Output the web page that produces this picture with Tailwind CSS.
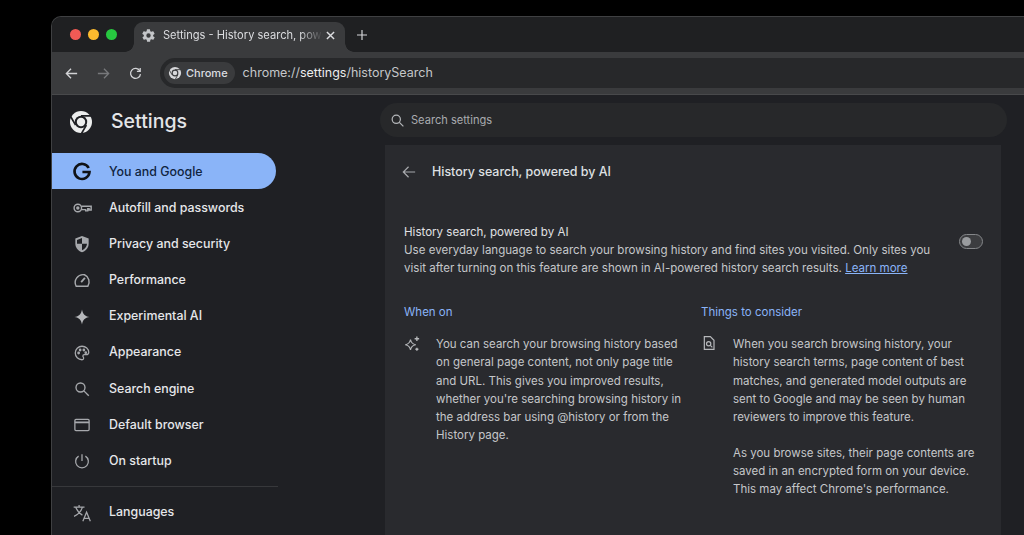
<!DOCTYPE html>
<html lang="en">
<head>
    <meta charset="UTF-8">
    <title>Settings - History search, powered by AI</title>
    <script src="https://cdn.jsdelivr.net/npm/@tailwindcss/browser@4"></script>
</head>
<body class="bg-black w-[1024px] h-[535px] overflow-hidden font-['Inter','Liberation_Sans',sans-serif]">
    <div class="ml-[51px] mt-[16px] w-[973px] h-[519px] rounded-tl-[10px] overflow-hidden border-l border-t border-[#3f4042] flex flex-col bg-[#1f2024]">

        <!-- tab strip -->
        <div class="h-[35px] shrink-0 bg-[#1f2022] flex items-end">
            <div class="flex items-center gap-[7px] pl-[18px] w-[82px] h-[35px] pb-[1px]">
                <span class="w-[11px] h-[11px] rounded-full bg-[#f25a55]"></span>
                <span class="w-[11px] h-[11px] rounded-full bg-[#fdbb2e]"></span>
                <span class="w-[11px] h-[11px] rounded-full bg-[#27c840]"></span>
            </div>
            <div class="relative w-[211px] h-[30px] bg-[#3a3b3d] rounded-t-[9px] flex items-center pl-[7px] pr-[10px] pb-[4px] text-[#dcdde0] text-[11.1px]">
                <span class="absolute -left-[9px] bottom-0 w-[9px] h-[9px] bg-[radial-gradient(circle_at_0_0,transparent_8.5px,#3a3b3d_9px)]"></span>
                <span class="absolute -right-[9px] bottom-0 w-[9px] h-[9px] bg-[radial-gradient(circle_at_100%_0,transparent_8.5px,#3a3b3d_9px)]"></span>
                <svg class="w-[15px] h-[15px] shrink-0" viewBox="0 0 24 24" fill="#c4c6c9"><path d="M19.4 13a7.6 7.6 0 0 0 0-2l2.1-1.6a.5.5 0 0 0 .1-.6l-2-3.5a.5.5 0 0 0-.6-.2l-2.5 1a7.4 7.4 0 0 0-1.7-1l-.4-2.6a.5.5 0 0 0-.5-.5h-4a.5.5 0 0 0-.5.4l-.4 2.7a7.4 7.4 0 0 0-1.7 1l-2.5-1a.5.5 0 0 0-.6.2l-2 3.5a.5.5 0 0 0 .1.6L4.6 11a7.6 7.6 0 0 0 0 2l-2.1 1.6a.5.5 0 0 0-.1.6l2 3.5c.1.2.4.3.6.2l2.5-1c.5.4 1.1.7 1.7 1l.4 2.6c0 .3.2.5.5.5h4c.3 0 .5-.2.5-.4l.4-2.7c.6-.3 1.2-.6 1.7-1l2.5 1c.2.1.5 0 .6-.2l2-3.5a.5.5 0 0 0-.1-.6zM12 15.500a3.500 3.500 0 1 1 0-7 3.500 3.500 0 0 1 0 7z"/></svg>
                <span class="ml-[7px] w-[160px] whitespace-nowrap overflow-hidden [mask-image:linear-gradient(to_right,black_85%,transparent)]">Settings - History search, powered by AI</span>
                <svg class="ml-auto w-[9px] h-[9px] shrink-0" viewBox="0 0 10 10" stroke="#dcdde0" stroke-width="1.6" fill="none"><path d="M1 1l8 8M9 1l-8 8"/></svg>
            </div>
            <div class="h-[30px] flex items-center ml-[12px] pb-[5px]">
                <svg class="w-[10px] h-[10px]" viewBox="0 0 11 11" stroke="#d5d6d9" stroke-width="1.3" fill="none"><path d="M5.500 0v11M0 5.500h11"/></svg>
            </div>
        </div>

        <!-- toolbar -->
        <div class="h-[43px] shrink-0 bg-[#3a3b3d] flex items-center border-b border-[#48494b]">
            <div class="flex items-center gap-[16px] pl-[12px] w-[108px] shrink-0">
                <svg class="w-[15px] h-[15px]" viewBox="0 0 16 16" fill="none" stroke="#d2d3d6" stroke-width="1.4"><path d="M14 8H2.500M7.500 3l-5 5 5 5"/></svg>
                <svg class="w-[15px] h-[15px] ml-[1px]" viewBox="0 0 16 16" fill="none" stroke="#77787b" stroke-width="1.4"><path d="M2 8h11.500M8.500 3l5 5-5 5"/></svg>
                <svg class="w-[15px] h-[15px] ml-[1px]" viewBox="0 0 16 16" fill="none" stroke="#d2d3d6" stroke-width="1.4"><path d="M12.600 5.200A5.300 5.300 0 1 0 13.300 8.600"/><path d="M13 2.200v3.500H9.500"/></svg>
            </div>
            <div class="h-[30px] flex-1 bg-[#27282a] rounded-l-full flex items-center pl-[4px]">
                <div class="h-[22px] pl-[4px] pr-[7px] rounded-full bg-[#3a3b3d] flex items-center gap-[4px] text-[#dcdde0] text-[11px] font-medium">
                    <svg class="w-[14px] h-[14px]" viewBox="0 0 24 24"><circle cx="12" cy="12" r="10.500" fill="#d6d7da"/><circle cx="12" cy="12" r="5.800" fill="#3a3b3d"/><circle cx="12" cy="12" r="3.900" fill="#d6d7da"/><path d="M12 6.200h9M6.900 15l-4.500-7.800M17 15l-4.500 7.800" stroke="#3a3b3d" stroke-width="1.500"/></svg>
                    Chrome
                </div>
                <div class="ml-[8px] pt-[1px] text-[12.5px] text-[#c4c6c9]"><span>chrome://</span><span class="text-[#eceded]">settings</span><span>/historySearch</span></div>
            </div>
        </div>

        <!-- settings header -->
        <div class="h-[50px] shrink-0 flex items-center bg-[#1f2024]">
            <div class="w-[328px] shrink-0 flex items-center pl-[17px] mt-[3px]">
                <svg class="w-[24px] h-[24px] shrink-0" viewBox="0 0 24 24"><circle cx="12" cy="12" r="11" fill="#eceded"/><circle cx="12" cy="12" r="6.200" fill="#1f2024"/><circle cx="12" cy="12" r="4.200" fill="#eceded"/><path d="M12 5.800h10M6.600 15.100l-5-8.600M17.400 15.100l-5 8.600" stroke="#1f2024" stroke-width="1.700"/></svg>
                <span class="ml-[18px] text-[19.5px] font-medium text-[#e4e5e8]">Settings</span>
            </div>
            <div class="w-[627px] h-[34px] pt-[1px] rounded-full bg-[#27282a] flex items-center pl-[10px] gap-[6px] text-[#a9abaf] text-[11.1px]">
                <svg class="w-[15px] h-[15px]" viewBox="0 0 16 16" fill="none" stroke="#b4b6b9" stroke-width="1.3"><circle cx="6.700" cy="6.700" r="4.400"/><path d="M10 10l4.300 4.300"/></svg>
                Search settings
            </div>
        </div>

        <!-- page -->
        <div class="flex-1 flex min-h-0">
            <nav class="w-[226px] shrink-0 pt-[8px] text-[12.4px] font-medium text-[#e6e7ea]">
                <a class="h-[36.2px] pt-[1.5px] w-[224px] flex items-center bg-[#8ab4f8] rounded-r-full text-[#10243f]">
                    <span class="w-[57px] pl-[20px] shrink-0">
                        <svg class="w-[20px] h-[20px]" viewBox="0 0 24 24" fill="none" stroke="#101317" stroke-width="3.200"><path d="M20 7.200A9 9 0 1 0 21 12H12.500"/></svg>
                    </span>You and Google
                </a>
                <a class="h-[36.2px] pt-[1.5px] flex items-center">
                    <span class="w-[57px] pl-[20px] shrink-0">
                        <svg class="w-[20px] h-[20px]" viewBox="0 0 24 24" fill="none" stroke="#a6a8ac" stroke-width="1.700"><circle cx="7" cy="12" r="4.500"/><circle cx="7" cy="12" r="1.200" fill="#a6a8ac"/><path d="M11.500 9.800H23v4.500h-2.500v-1.500h-1.600v2.600h-2.500v-1.500h-5"/></svg>
                    </span>Autofill and passwords
                </a>
                <a class="h-[36.2px] pt-[1.5px] flex items-center">
                    <span class="w-[57px] pl-[20px] shrink-0">
                        <svg class="w-[20px] h-[20px]" viewBox="0 0 24 24"><path d="M12 2.500l8 3v6c0 5-3.400 9-8 10.500-4.600-1.500-8-5.500-8-10.500v-6z" fill="#a6a8ac"/><path d="M12 4.700v7H6V7.300zM12 11.700h6c-.3 3.600-2.800 6.500-6 7.900z" fill="#1f2024"/></svg>
                    </span>Privacy and security
                </a>
                <a class="h-[36.2px] pt-[1.5px] flex items-center">
                    <span class="w-[57px] pl-[20px] shrink-0">
                        <svg class="w-[20px] h-[20px]" viewBox="0 0 24 24" fill="none" stroke="#a6a8ac" stroke-width="1.700"><path d="M5 19.500h14a9.500 9.500 0 0 0-4-13.800A9.500 9.500 0 0 0 5 19.500z"/><path d="M11 14.500l4.500-5" stroke-width="2.200"/></svg>
                    </span>Performance
                </a>
                <a class="h-[36.2px] pt-[1.5px] flex items-center">
                    <span class="w-[57px] pl-[21px] shrink-0">
                        <svg class="w-[18px] h-[18px]" viewBox="0 0 24 24" fill="#b6b8bb"><path d="M12 2c1 6 4 9 10 10-6 1-9 4-10 10-1-6-4-9-10-10 6-1 9-4 10-10z"/></svg>
                    </span>Experimental AI
                </a>
                <a class="h-[36.2px] pt-[1.5px] flex items-center">
                    <span class="w-[57px] pl-[21px] shrink-0">
                        <svg class="w-[18px] h-[18px]" viewBox="0 0 24 24" fill="none" stroke="#a6a8ac" stroke-width="1.700"><path d="M12 3a9 9 0 0 0 0 18c1.500 0 2.200-1 2.200-2 0-1.500-1-1.800-1-3 0-1 .8-1.700 1.800-1.700H18a3 3 0 0 0 3-3C21 6.500 17 3 12 3z"/><circle cx="7.500" cy="12" r="1" fill="#a6a8ac"/><circle cx="9.500" cy="8" r="1" fill="#a6a8ac"/><circle cx="14.500" cy="8" r="1" fill="#a6a8ac"/><circle cx="17" cy="11.500" r="1" fill="#a6a8ac"/></svg>
                    </span>Appearance
                </a>
                <a class="h-[36.2px] pt-[1.5px] flex items-center">
                    <span class="w-[57px] pl-[21px] shrink-0">
                        <svg class="w-[18px] h-[18px]" viewBox="0 0 24 24" fill="none" stroke="#a6a8ac" stroke-width="1.800"><circle cx="10" cy="10" r="6"/><path d="M14.500 14.500l6.500 6.500"/></svg>
                    </span>Search engine
                </a>
                <a class="h-[36.2px] pt-[1.5px] flex items-center">
                    <span class="w-[57px] pl-[21px] shrink-0">
                        <svg class="w-[18px] h-[18px]" viewBox="0 0 24 24" fill="none" stroke="#a6a8ac" stroke-width="1.700"><rect x="2.500" y="4.500" width="19" height="15" rx="1.500"/><path d="M2.500 8.500h19" stroke-width="2.400"/></svg>
                    </span>Default browser
                </a>
                <a class="h-[36.2px] pt-[1.5px] flex items-center">
                    <span class="w-[57px] pl-[21px] shrink-0">
                        <svg class="w-[18px] h-[18px]" viewBox="0 0 24 24" fill="none" stroke="#a6a8ac" stroke-width="1.700"><path d="M12 3v9M7.500 5.500a8.500 8.500 0 1 0 9 0"/></svg>
                    </span>On startup
                </a>
                <div class="border-t border-[#37383b] mt-[7px] mb-[7px]"></div>
                <a class="h-[36.2px] pt-[1.5px] flex items-center">
                    <span class="w-[57px] pl-[20px] shrink-0">
                        <svg class="w-[20px] h-[20px]" viewBox="0 0 24 24" fill="none" stroke="#a6a8ac" stroke-width="1.500"><path d="M2 5h13M8.500 2.500V5M12.500 5C11 10 7 14 2.500 16M4.500 5c1.500 4 5 8 8 9.500M13 22l4.500-11L22 22M14.500 18.500h6"/></svg>
                    </span>Languages
                </a>
            </nav>

            <main class="ml-[107px] w-[616px] bg-[#292a2e] text-[#c5c7ca] text-[11.5px] leading-[18.1px]">
                <div class="h-[52px] pt-[1.5px] flex items-center pl-[17px]">
                    <svg class="w-[14px] h-[14px]" viewBox="0 0 16 16" fill="none" stroke="#a6a8ac" stroke-width="1.400"><path d="M15 8H1.500M7.500 2l-6 6 6 6"/></svg>
                    <span class="ml-[16px] text-[12.45px] font-medium text-[#dfe0e3]">History search, powered by AI</span>
                </div>
                <div class="pl-[19px] pr-[18px] pt-[26px] flex items-center justify-between text-[11.55px]">
                    <div class="w-[530px]">
                        <div class="text-[#e0e1e4]">History search, powered by AI</div>
                        <p>Use everyday language to search your browsing history and find sites you visited. Only sites you visit after turning on this feature are shown in AI-powered history search results. <a class="text-[#8ab4f8] underline">Learn more</a></p>
                    </div>
                    <span class="w-[24px] h-[15px] rounded-full border border-[#85878a] bg-[#3c3d40] flex items-center pl-[2px] mt-[-18px]">
                        <span class="w-[9px] h-[9px] rounded-full bg-[#9a9c9f]"></span>
                    </span>
                </div>
                <div class="grid grid-cols-[297px_1fr] pl-[19px] pr-[18px] pt-[26px]">
                    <div>
                        <h3 class="text-[#8ab4f8]">When on</h3>
                        <div class="flex mt-[14px]">
                            <svg class="w-[18px] h-[18px] -ml-[1px] shrink-0" viewBox="0 0 24 24" fill="none" stroke="#b6b8bb" stroke-width="1.500"><path d="M10 6c.7 4 3 6.300 7 7-4 .7-6.300 3-7 7-.7-4-3-6.300-7-7 4-.7 6.300-3 7-7z"/><path d="M18.500 2v6M15.500 5h6M18.500 17v4M16.500 19h4" stroke-width="1.800"/></svg>
                            <p class="ml-[15px] w-[250px]">You can search your browsing history based on general page content, not only page title and URL. This gives you improved results, whether you're searching browsing history in the address bar using @history or from the History page.</p>
                        </div>
                    </div>
                    <div>
                        <h3 class="text-[#8ab4f8]">Things to consider</h3>
                        <div class="flex mt-[14px]">
                            <svg class="w-[16px] h-[16px] shrink-0" viewBox="0 0 24 24" fill="none" stroke="#b6b8bb" stroke-width="1.800"><path d="M5 2.500h9l5.500 5.500v13.500H5z"/><circle cx="11.500" cy="13" r="3.200"/><path d="M14 15.500l3 3"/></svg>
                            <div class="ml-[16px] w-[248px]">
                                <p>When you search browsing history, your history search terms, page content of best matches, and generated model outputs are sent to Google and may be seen by human reviewers to improve this feature.</p>
                                <p class="mt-[18px]">As you browse sites, their page contents are saved in an encrypted form on your device. This may affect Chrome's performance.</p>
                            </div>
                        </div>
                    </div>
                </div>
            </main>
        </div>
    </div>
</body>
</html>
